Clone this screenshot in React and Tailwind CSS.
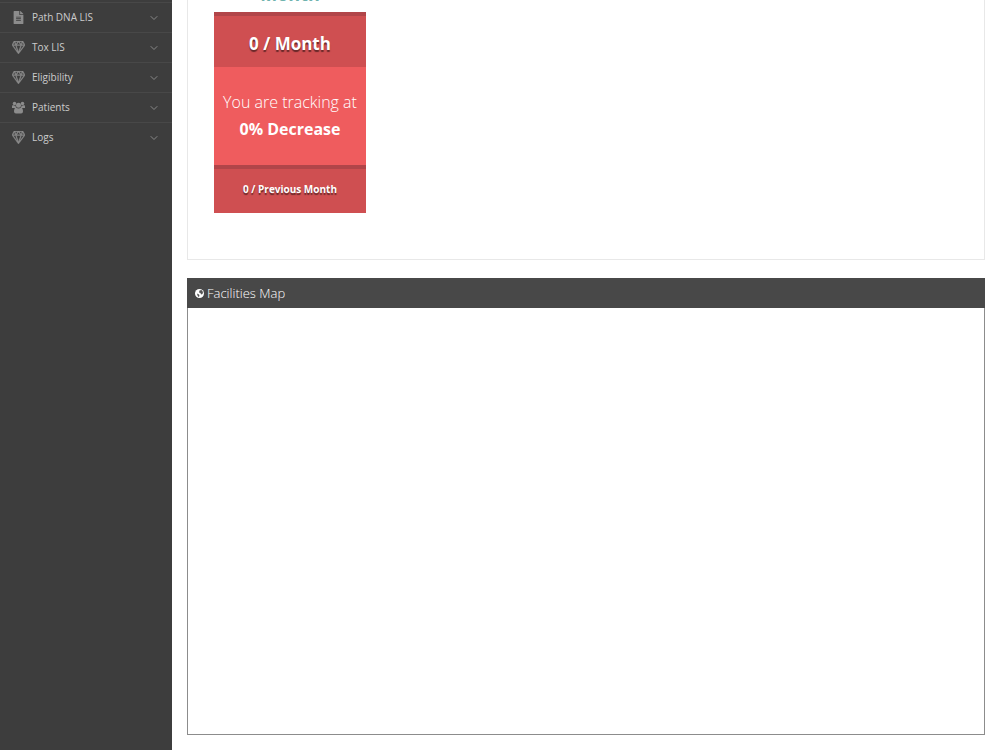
import { FaFileAlt } from 'react-icons/fa'
import { SlDiamond } from 'react-icons/sl'
import { LuChevronDown } from 'react-icons/lu'

function DiamondIcon({ className }) {
  return <SlDiamond className={className} strokeWidth={28} />
}

function PeopleIcon({ className }) {
  return (
    <svg viewBox="0 0 26 24" fill="currentColor" className={className} aria-hidden="true">
      <circle cx="5" cy="4" r="3.5" />
      <circle cx="21" cy="4" r="3.5" />
      <path d="M0 13V10q0-3 2-3 3 2 5 1 0 3 2 5zM26 13V10q0-3-2-3-3 2-5 1 0 3-2 5z" />
      <circle cx="13" cy="7.5" r="5" />
      <path d="M4 20q0-7 4-7.500 5 3 10 0 4 .5 4 7.500 0 4-4 4H8q-4 0-4-4z" />
    </svg>
  )
}

function GlobeIcon({ className }) {
  return (
    <svg viewBox="0 0 18 18" className={className} aria-hidden="true">
      <circle cx="9" cy="9" r="9" fill="#ffffff" />
      <path d="M9 3l4-1 3 4-1 4-3 1-1-3-3-1zM4 9l4 2 1 3-2 2-2-3z" fill="#555555" />
    </svg>
  )
}

const links = [
  { label: 'Path DNA LIS', icon: FaFileAlt },
  { label: 'Tox LIS', icon: DiamondIcon },
  { label: 'Eligibility', icon: DiamondIcon },
  { label: 'Patients', icon: PeopleIcon },
  { label: 'Logs', icon: DiamondIcon },
]

function Sidebar() {
  return (
    <nav className="w-[172px] shrink-0 bg-[#3d3d3d] pt-[2px]">
      <ul>
        {links.map(({ label, icon: Icon }) => (
          <li key={label} className="border-t border-[#484848]">
            <a href="#" className="flex h-[29px] items-center px-3 text-[10px] text-[#cccccc]">
              <Icon className="mr-[7px] size-[13px] text-[#8c8c8c]" />
              <span className="flex-1">{label}</span>
              <LuChevronDown className="size-[12px] text-[#888888]" />
            </a>
          </li>
        ))}
      </ul>
    </nav>
  )
}

function TrackingCard() {
  return (
    <div className="w-[152px] text-center text-white">
      <div className="flex h-[3px] items-end justify-center overflow-hidden">
        <span className="text-[18px] leading-[18px] font-bold text-[#6fb3ae]">Month</span>
      </div>
      <div className="mt-[9px] border-t-4 border-[#b14549] bg-[#cf4f51] pt-[15px] pb-[11px] text-[17px] leading-[25px] font-bold [text-shadow:0_2px_1px_rgba(0,0,0,0.5)]">
        0 / Month
      </div>
      <div className="bg-[#ef5c5e] py-[22px] text-[16px] leading-[27px]">
        <p className="font-light">You are tracking at</p>
        <p className="font-bold">0% Decrease</p>
      </div>
      <div className="border-t-4 border-[#b14549] bg-[#cf4f51] pt-[10px] pb-[14px] text-[10px] leading-[20px] font-bold [text-shadow:0_2px_1px_rgba(0,0,0,0.5)]">
        0 / Previous Month
      </div>
    </div>
  )
}

export default function App() {
  return (
    <div className="flex min-h-screen bg-white font-['Open_Sans',sans-serif]">
      <Sidebar />
      <main className="flex min-w-0 flex-1 flex-col px-[15px] pb-[15px]">
        <section className="border border-t-0 border-[#e8e8e8] px-[26px] pb-[46px]">
          <TrackingCard />
        </section>
        <section className="mt-[18px] flex flex-1 flex-col">
          <h2 className="flex h-[30px] items-center gap-[3px] bg-[#484848] px-2 pt-px text-[13px] font-light text-white">
            <GlobeIcon className="size-[9px]" />
            Facilities Map
          </h2>
          <div className="flex-1 border border-t-0 border-[#8c8c8c]" />
        </section>
      </main>
    </div>
  )
}
